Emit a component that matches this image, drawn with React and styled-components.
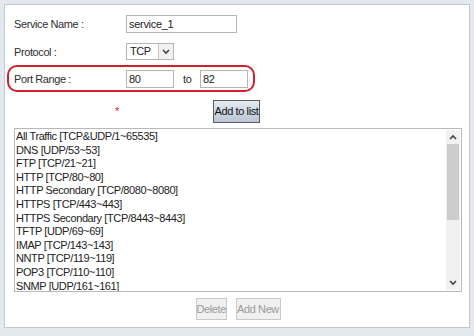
import styled, { createGlobalStyle } from 'styled-components'

const services = [
	'All Traffic [TCP&UDP/1~65535]',
	'DNS [UDP/53~53]',
	'FTP [TCP/21~21]',
	'HTTP [TCP/80~80]',
	'HTTP Secondary [TCP/8080~8080]',
	'HTTPS [TCP/443~443]',
	'HTTPS Secondary [TCP/8443~8443]',
	'TFTP [UDP/69~69]',
	'IMAP [TCP/143~143]',
	'NNTP [TCP/119~119]',
	'POP3 [TCP/110~110]',
	'SNMP [UDP/161~161]',
]

const Chevron = ({ up }) => (
	<svg width="8" height="6" viewBox="0 0 8 6">
		<path d={up ? 'M1 5 L4 2 L7 5' : 'M1 1 L4 4 L7 1'} fill="none" stroke="#444" strokeWidth="1.6" />
	</svg>
)

const App = () => {
	return (
		<>
			<Global />
			<Panel>
				<Row $top={10}>
					<Label>Service Name :</Label>
					<Input $w={111} defaultValue="service_1" />
				</Row>
				<Row $top={10}>
					<Label>Protocol :</Label>
					<Select>
						<SelectValue>TCP</SelectValue>
						<SelectArrow><Chevron /></SelectArrow>
					</Select>
				</Row>
				<Highlight>
					<Label>Port Range :</Label>
					<Input $w={48} defaultValue="80" />
					<To>to</To>
					<Input $w={48} defaultValue="82" />
				</Highlight>
				<ActionRow>
					<Asterisk>*</Asterisk>
					<AddButton>Add to list</AddButton>
				</ActionRow>
				<ListBox>
					<Items>
						{services.map((s) => (
							<Item key={s}>{s}</Item>
						))}
					</Items>
					<Scrollbar>
						<ScrollArrow><Chevron up /></ScrollArrow>
						<Thumb />
						<Track />
						<ScrollArrow><Chevron /></ScrollArrow>
					</Scrollbar>
				</ListBox>
				<Footer>
					<GrayButton $w={31}>Delete</GrayButton>
					<GrayButton $w={45}>Add New</GrayButton>
				</Footer>
			</Panel>
		</>
	)
}

export default App

const Global = createGlobalStyle`
	html, body {
		margin: 0;
		background: #e4e9ef;
		font-family: "Liberation Sans", Arial, sans-serif;
		font-size: 11px;
		letter-spacing: -0.4px;
	}
`

const Panel = styled.div`
	margin: 4px 0 0 4px;
	width: 466px;
	height: 324px;
	box-sizing: border-box;
	background: #fff;
	border: 1px solid #c3c8ce;
	display: flex;
	flex-direction: column;
`

const Row = styled.div`
	display: flex;
	align-items: center;
	margin-top: ${({ $top }) => $top}px;
	padding-left: 9px;
`

const Label = styled.div`
	width: 112px;
	color: #2e2e2e;
	flex-shrink: 0;
`

const Input = styled.input`
	width: ${({ $w }) => $w}px;
	height: 18px;
	box-sizing: border-box;
	border: 1px solid #b5b5b5;
	padding: 0 2px;
	font-family: inherit;
	font-size: 11px;
	letter-spacing: -0.3px;
	color: #222;
	outline: none;
`

const Select = styled.div`
	display: flex;
	height: 17px;
	box-sizing: border-box;
	border: 1px solid #b5b5b5;
`

const SelectValue = styled.div`
	width: 28px;
	padding-left: 3px;
	line-height: 15px;
	color: #222;
`

const SelectArrow = styled.div`
	width: 14px;
	display: flex;
	align-items: center;
	justify-content: center;
	border-left: 1px solid #c5c5c5;
	background: #f2f2f2;
`

const Highlight = styled.div`
	display: flex;
	align-items: center;
	margin: 5px 0 0 2px;
	width: 248px;
	height: 27px;
	box-sizing: border-box;
	border: 2px solid #d4202c;
	border-radius: 10px;
	padding: 0 5px;
`

const To = styled.span`
	width: 26px;
	padding-left: 9px;
	box-sizing: border-box;
	color: #2e2e2e;
`

const ActionRow = styled.div`
	display: flex;
	align-items: center;
	margin-top: 7px;
	height: 24px;
`

const Asterisk = styled.span`
	margin-left: 110px;
	color: #d4202c;
	width: 98px;
`

const AddButton = styled.button`
	width: 47px;
	height: 23px;
	padding: 0;
	border: 1px solid #5a5f66;
	background: linear-gradient(#e3eaf1, #bac6d2);
	font-family: inherit;
	font-size: 11px;
	letter-spacing: -0.4px;
	color: #111;
	white-space: nowrap;
`

const ListBox = styled.div`
	display: flex;
	margin: 5px 0 0 9px;
	width: 448px;
	height: 164px;
	box-sizing: border-box;
	border: 1px solid #b9b9b9;
`

const Items = styled.div`
	flex: 1;
	overflow: hidden;
	padding: 1px 0 0 1px;
`

const Item = styled.div`
	line-height: 13.6px;
	color: #222;
	white-space: nowrap;
`

const Scrollbar = styled.div`
	width: 14px;
	margin: 1px 1px 1px 0;
	display: flex;
	flex-direction: column;
	background: #f1f1f1;
`

const ScrollArrow = styled.div`
	height: 14px;
	display: flex;
	align-items: center;
	justify-content: center;
`

const Thumb = styled.div`
	height: 76px;
	margin: 0 1px;
	background: #cdcdcd;
`

const Track = styled.div`
	flex: 1;
`

const Footer = styled.div`
	display: flex;
	justify-content: center;
	gap: 9px;
	margin-top: 6px;
	padding-left: 2px;
`

const GrayButton = styled.button`
	width: ${({ $w }) => $w}px;
	height: 22px;
	padding: 0;
	border: 1px solid #c8c8c8;
	background: #f0f0f0;
	font-family: inherit;
	font-size: 11px;
	letter-spacing: -0.4px;
	color: #9a9a9a;
	white-space: nowrap;
`
